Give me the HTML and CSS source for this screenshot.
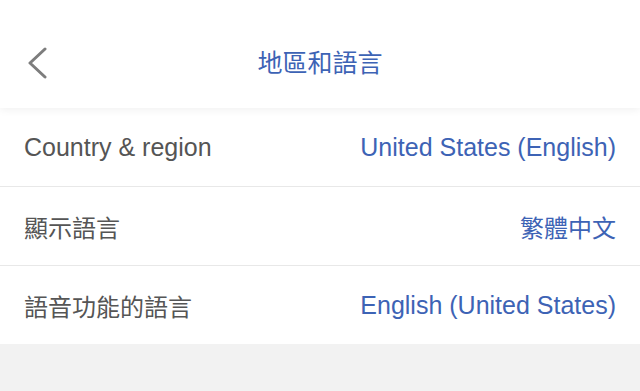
FILE: index.html
```html
<!DOCTYPE html>
<html lang="zh-Hant">
<head>
<meta charset="utf-8">
<link rel="stylesheet" href="styles.css">
</head>
<body>
<div class="page">
  <header class="nav">
    <button class="back" aria-label="返回">
      <svg width="22" height="32" viewBox="0 0 22 32"><path d="M19 2 L4 16 L19 30" fill="none" stroke="#7d7d7d" stroke-width="3" stroke-linecap="round" stroke-linejoin="round"/></svg>
    </button>
    <h1 class="title">地區和語言</h1>
  </header>
  <ul class="list">
    <li class="row"><span class="label">Country &amp; region</span><span class="value">United States (English)</span></li>
    <li class="row"><span class="label cjk">顯示語言</span><span class="value cjk">繁體中文</span></li>
    <li class="row"><span class="label cjk">語音功能的語言</span><span class="value">English (United States)</span></li>
  </ul>
</div>
</body>
</html>
```
FILE: styles.css
```css
html, body {
  margin: 0;
  padding: 0;
  background: #f2f2f2;
}
body {
  font-family: "Liberation Sans", "Noto Sans CJK TC", sans-serif;
  width: 640px;
  height: 391px;
  overflow: hidden;
}
.page {
  display: flex;
  flex-direction: column;
}
.nav {
  position: relative;
  height: 108px;
  background: #ffffff;
  display: flex;
  align-items: center;
  justify-content: center;
  box-shadow: 0 2px 8px rgba(0,0,0,0.06);
  z-index: 1;
}
.back {
  position: absolute;
  left: 26px;
  top: 47px;
  border: 0;
  padding: 0;
  background: none;
  display: flex;
}
.title {
  margin: 0;
  padding-top: 14px;
  font-size: 25px;
  font-weight: 400;
  color: #3d63b5;
  font-family: "Noto Sans CJK TC", sans-serif;
}
.list {
  list-style: none;
  margin: 0;
  padding: 0;
  background: #ffffff;
}
.row {
  height: 78px;
  display: flex;
  align-items: center;
  justify-content: space-between;
  padding: 0 24px;
  border-bottom: 1px solid #e8e8e8;
  font-size: 25px;
}
.row:first-child {
  height: 77px;
  padding-top: 1px;
}
.row:last-child {
  border-bottom: 0;
}
.label {
  color: #555555;
}
.value {
  color: #3d63b5;
}
.cjk {
  font-size: 24px;
}
```
